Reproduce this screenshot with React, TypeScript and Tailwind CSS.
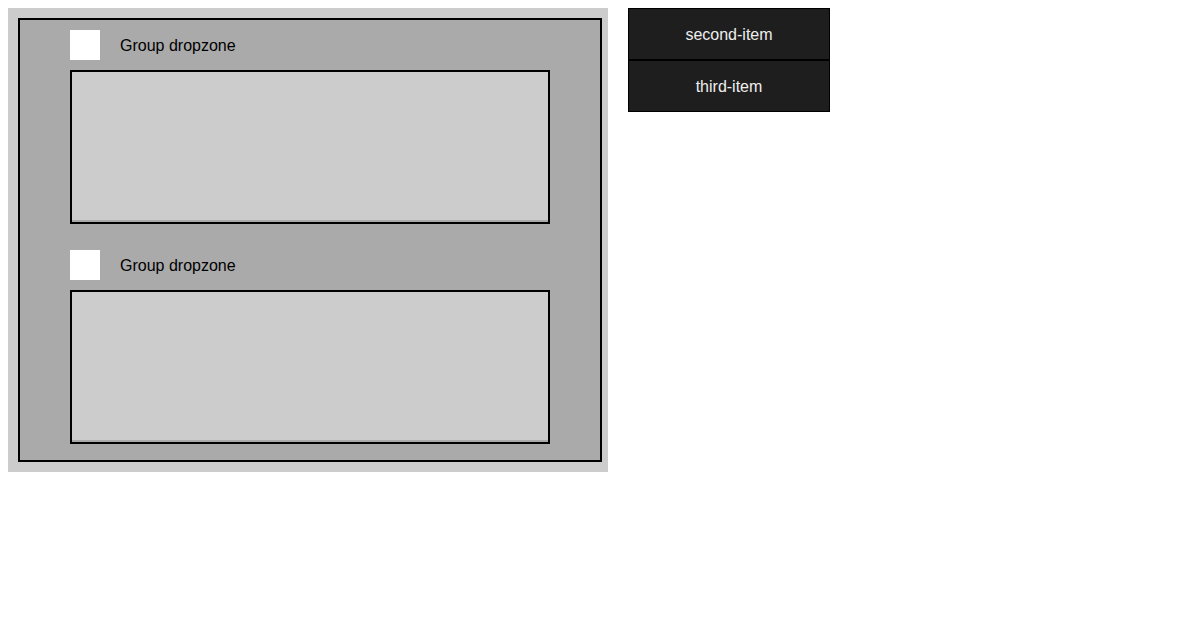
const groups = ["group-a", "group-b"];
const items = ["second-item", "third-item"];

function Group() {
  return (
    <div className="pt-[10px] pb-[16px] pl-[50px]">
      <div className="flex h-[30px] items-center gap-[20px]">
        <div className="h-[30px] w-[30px] bg-white" />
        <span className="pt-[2px] text-[16px] text-black">Group dropzone</span>
      </div>
      <div className="mt-[10px] flex h-[154px] w-[480px] flex-col border-2 border-black bg-[#cccccc]">
        <div className="flex-1" />
        <div className="h-[2px] bg-[#aaaaaa]" />
      </div>
    </div>
  );
}

export default function App() {
  return (
    <div className="flex items-start gap-[20px] p-[8px] font-['Liberation_Sans',Arial,sans-serif]">
      <section className="w-[600px] bg-[#cccccc] pt-[10px] pb-[10px] pl-[10px] pr-[6px]">
        <div className="border-2 border-black bg-[#aaaaaa]">
          {groups.map((id) => (
            <Group key={id} />
          ))}
        </div>
      </section>
      <div className="flex w-[202px] flex-col">
        {items.map((item) => (
          <div
            key={item}
            className="flex h-[52px] items-center justify-center border border-black bg-[#1e1e1e] pt-[2px] text-[16px] text-[#eeeeee]"
          >
            {item}
          </div>
        ))}
      </div>
    </div>
  );
}
